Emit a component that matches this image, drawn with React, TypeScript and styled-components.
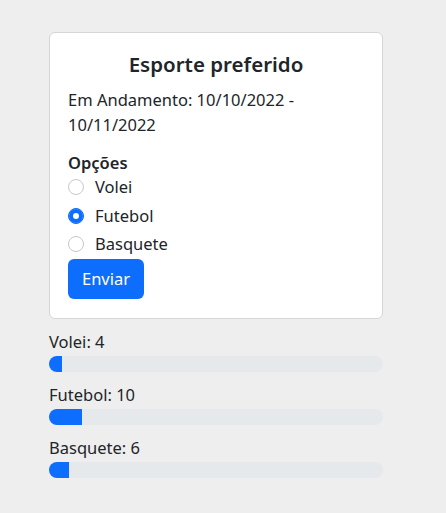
import React, { useState } from "react";
import styled, { createGlobalStyle } from "styled-components";

const GlobalStyle = createGlobalStyle`
  * { box-sizing: border-box; }
  body {
    margin: 0;
    background: #eeeeee;
    color: #212529;
    font-family: "Noto Sans", "Open Sans", sans-serif;
    font-size: 16.5px;
    line-height: 24px;
  }
`;

const OPTIONS = [
  { name: "Volei", votes: 4 },
  { name: "Futebol", votes: 10 },
  { name: "Basquete", votes: 6 },
];

function App() {
  const [choice, setChoice] = useState("Futebol");

  return (
    <>
      <GlobalStyle />
      <Page>
        <Card>
          <Title>Esporte preferido</Title>
          <Period>Em Andamento: 10/10/2022 - 10/11/2022</Period>
          <Form onSubmit={(e) => e.preventDefault()}>
            <Legend>Opções</Legend>
            {OPTIONS.map((opt) => (
              <Check key={opt.name}>
                <Radio
                  type="radio"
                  name="esporte"
                  checked={choice === opt.name}
                  onChange={() => setChoice(opt.name)}
                />
                {opt.name}
              </Check>
            ))}
            <SubmitButton type="submit">Enviar</SubmitButton>
          </Form>
        </Card>

        <Results>
          {OPTIONS.map((opt) => (
            <Result key={opt.name}>
              <ResultLabel>
                {opt.name}: {opt.votes}
              </ResultLabel>
              <Track>
                <Fill style={{ width: `${opt.votes}%` }} />
              </Track>
            </Result>
          ))}
        </Results>
      </Page>
    </>
  );
}

const Page = styled.div`
  width: 334px;
  margin-left: 49px;
  padding-top: 32px;
`;

const Card = styled.div`
  background: #fff;
  border: 1px solid #d6d6d6;
  border-radius: 6px;
  padding: 16px 18px 19px;
`;

const Title = styled.h4`
  margin: 0 0 8px;
  text-align: center;
  font-size: 20.5px;
  font-weight: 600;
  line-height: 30px;
`;

const Period = styled.p`
  margin: 0 0 14px;
  line-height: 25px;
`;

const Form = styled.form`
  display: flex;
  flex-direction: column;
  align-items: flex-start;
`;

const Legend = styled.div`
  font-weight: 600;
  line-height: 24px;
`;

const Check = styled.label`
  display: flex;
  align-items: center;
  gap: 11px;
  height: 24px;
  margin-bottom: 4.5px;
  cursor: pointer;
`;

const Radio = styled.input`
  appearance: none;
  margin: 0;
  width: 16px;
  height: 16px;
  border-radius: 50%;
  border: 1px solid #c8c8c8;
  background: #fff;

  &:checked {
    border-color: #0d6efd;
    background: #0d6efd;
    box-shadow: inset 0 0 0 4px #0d6efd, inset 0 0 0 8px #fff;
  }
`;

const SubmitButton = styled.button`
  margin-top: -2px;
  height: 40px;
  padding: 0 14px;
  border: none;
  border-radius: 6px;
  background: #0d6efd;
  color: #fff;
  font-family: inherit;
  font-size: 16.5px;
`;

const Results = styled.div`
  margin-top: 11px;
  display: flex;
  flex-direction: column;
  gap: 11px;
`;

const Result = styled.div`
  display: flex;
  flex-direction: column;
  gap: 2px;
`;

const ResultLabel = styled.div`
  line-height: 24px;
`;

const Track = styled.div`
  height: 16px;
  border-radius: 8px;
  background: #e6e9ec;
  overflow: hidden;
`;

const Fill = styled.div`
  height: 100%;
  background: #0d6efd;
`;

export default App;
